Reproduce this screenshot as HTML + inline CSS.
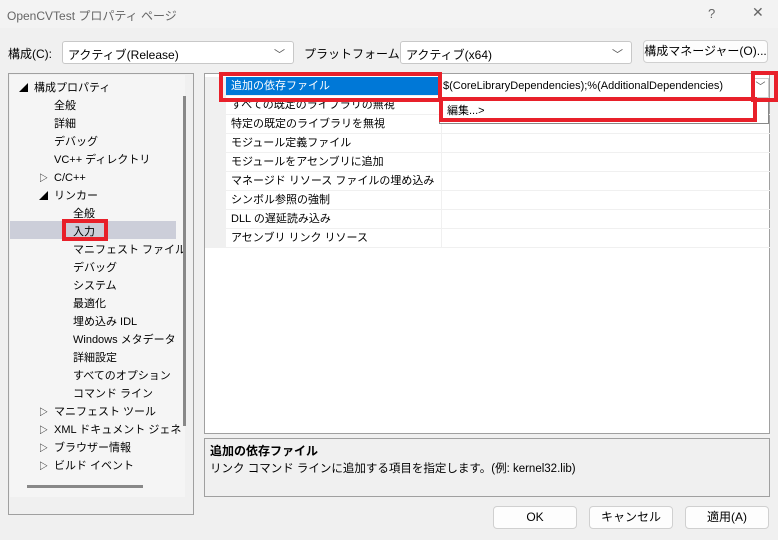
<!DOCTYPE html>
<html><head><meta charset="utf-8"><style>
*{box-sizing:border-box;margin:0;padding:0}
body{width:778px;height:540px;background:#f0f0f0;font-family:"Liberation Sans","Noto Sans CJK JP",sans-serif;font-size:11px;color:#000;position:relative;overflow:hidden}
.a{position:absolute;white-space:nowrap}
.combo{position:absolute;background:#fff;border:1px solid #c8c8c8;border-radius:3px;height:23px;padding:4px 5px}
.chev{position:absolute;right:8px;top:4px;color:#555;font-size:11px}
.btn{position:absolute;background:#fdfdfd;border:1px solid #d0d0d0;border-radius:4px;height:23px;text-align:center;line-height:21px}
.red{position:absolute;border:4px solid #e8202a}
.tr{position:absolute;left:0;height:18px;line-height:18px}
.row{position:absolute;left:21px;width:544px;height:19px;border-bottom:1px solid #f0f0f0;line-height:18px;padding-left:5px}
</style></head><body>
<div class="a" style="left:0;top:0;width:778px;height:28px;background:#f3f3f3"></div>
<div class="a" style="left:7px;top:7px;color:#666;font-size:12px">OpenCVTest プロパティ ページ</div>
<div class="a" style="left:708px;top:6px;color:#666;font-size:13px">?</div>
<div class="a" style="left:752px;top:4px;color:#666;font-size:14px">✕</div>

<div class="a" style="left:8px;top:45px;font-size:12px">構成(C):</div>
<div class="combo" style="left:62px;top:41px;width:232px;font-size:12px">アクティブ(Release)<span class="chev">﹀</span></div>
<div class="a" style="left:304px;top:45px;font-size:12px">プラットフォーム(P):</div>
<div class="combo" style="left:400px;top:41px;width:232px;font-size:12px">アクティブ(x64)<span class="chev">﹀</span></div>
<div class="btn" style="left:643px;top:40px;width:125px;font-size:12px">構成マネージャー(O)...</div>

<div class="a" style="left:8px;top:73px;width:186px;height:442px;border:1px solid #a0a0a0;background:#f0f0f0">
 <div class="a" style="left:1px;top:1px;width:175px;height:422px;background:#f5f5f5"></div>
 <div class="a" style="left:1px;top:147px;width:166px;height:18px;background:#ccced9"></div>
 <div style="position:absolute;left:0;top:5px;width:174px;height:415px;overflow:hidden">
  <div class="tr" style="top:0;left:10px;font-size:9px">◢</div><div class="tr" style="top:0;left:25px">構成プロパティ</div>
  <div class="tr" style="top:18px;left:45px">全般</div>
  <div class="tr" style="top:36px;left:45px">詳細</div>
  <div class="tr" style="top:54px;left:45px">デバッグ</div>
  <div class="tr" style="top:72px;left:45px">VC++ ディレクトリ</div>
  <div class="tr" style="top:90px;left:30px;font-size:9px">▷</div><div class="tr" style="top:90px;left:45px">C/C++</div>
  <div class="tr" style="top:108px;left:30px;font-size:9px">◢</div><div class="tr" style="top:108px;left:45px">リンカー</div>
  <div class="tr" style="top:126px;left:64px">全般</div>
  <div class="tr" style="top:144px;left:64px">入力</div>
  <div class="tr" style="top:162px;left:64px">マニフェスト ファイル</div>
  <div class="tr" style="top:180px;left:64px">デバッグ</div>
  <div class="tr" style="top:198px;left:64px">システム</div>
  <div class="tr" style="top:216px;left:64px">最適化</div>
  <div class="tr" style="top:234px;left:64px">埋め込み IDL</div>
  <div class="tr" style="top:252px;left:64px">Windows メタデータ</div>
  <div class="tr" style="top:270px;left:64px">詳細設定</div>
  <div class="tr" style="top:288px;left:64px">すべてのオプション</div>
  <div class="tr" style="top:306px;left:64px">コマンド ライン</div>
  <div class="tr" style="top:324px;left:30px;font-size:9px">▷</div><div class="tr" style="top:324px;left:45px">マニフェスト ツール</div>
  <div class="tr" style="top:342px;left:30px;font-size:9px">▷</div><div class="tr" style="top:342px;left:45px">XML ドキュメント ジェネレーター</div>
  <div class="tr" style="top:360px;left:30px;font-size:9px">▷</div><div class="tr" style="top:360px;left:45px">ブラウザー情報</div>
  <div class="tr" style="top:378px;left:30px;font-size:9px">▷</div><div class="tr" style="top:378px;left:45px">ビルド イベント</div>
 </div>
 <div class="a" style="left:174px;top:22px;width:3px;height:330px;background:#888"></div>
 <div class="a" style="left:18px;top:411px;width:116px;height:3px;background:#888"></div>
</div>
<div class="red" style="left:62px;top:219px;width:46px;height:22px"></div>

<div class="a" style="left:204px;top:73px;width:566px;height:361px;border:1px solid #a0a0a0;background:#fff">
 <div class="a" style="left:0;top:3px;width:21px;height:171px;background:#f0f0f0"></div>
 <div class="a" style="left:236px;top:3px;width:1px;height:171px;background:#f0f0f0"></div>
 <div class="row" style="top:3px;width:215px;background:#0078d7;color:#fff">追加の依存ファイル</div>
 <div class="a" style="left:238px;top:6px">$(CoreLibraryDependencies);%(AdditionalDependencies)</div>
 <div class="row" style="top:22px">すべての既定のライブラリの無視</div>
 <div class="row" style="top:41px">特定の既定のライブラリを無視</div>
 <div class="row" style="top:60px">モジュール定義ファイル</div>
 <div class="row" style="top:79px">モジュールをアセンブリに追加</div>
 <div class="row" style="top:98px">マネージド リソース ファイルの埋め込み</div>
 <div class="row" style="top:117px">シンボル参照の強制</div>
 <div class="row" style="top:136px">DLL の遅延読み込み</div>
 <div class="row" style="top:155px">アセンブリ リンク リソース</div>
 <div class="a" style="left:234px;top:24px;width:330px;height:26px;background:#fff;border:1px solid #888;border-top:none"></div>
 <div class="a" style="left:242px;top:28px">編集...&gt;</div>
 <div class="a" style="left:547px;top:4px;width:17px;height:20px;background:#fff;border:1px solid #ccc;font-size:10px;text-align:center;line-height:18px;color:#555">﹀</div>
</div>
<div class="red" style="left:219px;top:72px;width:223px;height:30px"></div>
<div class="red" style="left:439px;top:97px;width:318px;height:25px"></div>
<div class="red" style="left:751px;top:71px;width:27px;height:31px"></div>

<div class="a" style="left:204px;top:438px;width:566px;height:59px;border:1px solid #a0a0a0;background:#f0f0f0">
 <div class="a" style="left:5px;top:3px;font-weight:bold;font-size:12px">追加の依存ファイル</div>
 <div class="a" style="left:5px;top:21px;font-size:11.5px">リンク コマンド ラインに追加する項目を指定します。(例: kernel32.lib)</div>
</div>

<div class="btn" style="left:493px;top:506px;width:84px;font-size:12px">OK</div>
<div class="btn" style="left:589px;top:506px;width:84px;font-size:12px">キャンセル</div>
<div class="btn" style="left:685px;top:506px;width:84px;font-size:12px">適用(A)</div>
</body></html>
